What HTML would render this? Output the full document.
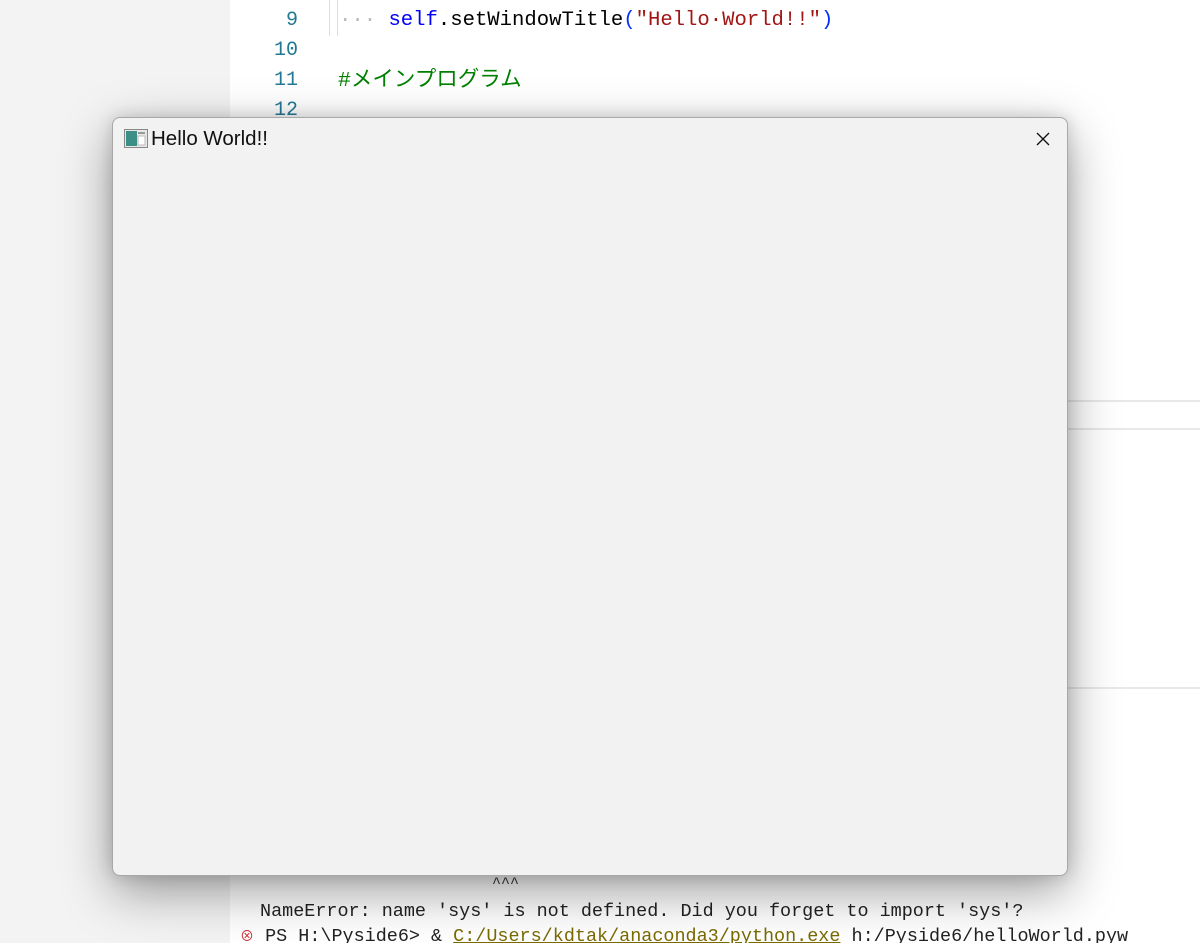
<!DOCTYPE html>
<html><head><meta charset="utf-8"><style>
html,body{margin:0;padding:0;overflow:hidden;height:943px}
body{width:1200px;height:943px;position:relative;overflow:hidden;background:#f3f3f3;font-family:"Liberation Mono","Noto Sans CJK JP",monospace}
#ed{position:absolute;left:230px;top:0;width:970px;height:943px;background:#fff}
.ln{position:absolute;left:230px;width:68px;text-align:right;color:#237893;font-size:20px;line-height:30px}
.code{position:absolute;font-size:20.6px;line-height:30px;white-space:pre}
.hl{position:absolute;left:230px;right:0;height:2px;background:#e8e8e8}
#term{position:absolute;left:230px;top:876px;width:970px;height:67px;background:#fff;overflow:hidden}
.t{position:absolute;font-size:18.45px;line-height:24px;white-space:pre}
#win{position:absolute;left:112px;top:117px;width:954px;height:757px;background:#f2f2f2;border:1px solid #a8a8a8;border-radius:8px;box-shadow:0 16px 50px rgba(0,0,0,0.38),0 0 16px rgba(0,0,0,0.15)}
#title{position:absolute;left:38px;top:9px;font-family:"Liberation Sans",sans-serif;font-size:20.5px;color:#111}
</style></head><body>
<div id="ed"></div>
<div class="ln" style="top:6px">9</div>
<div class="ln" style="top:36px">10</div>
<div class="ln" style="top:66px">11</div>
<div class="ln" style="top:96px">12</div>
<div style="position:absolute;left:337px;top:0;width:1px;height:36px;background:#ddd"></div>
<div style="position:absolute;left:329px;top:0;width:1px;height:36px;background:#ddd"></div>
<div class="code" style="left:339px;top:6px;color:#bbb">··· <span style="color:#0000ff">self</span><span style="color:#000">.setWindowTitle</span><span style="color:#0431fa">(</span><span style="color:#a31515">"Hello·World!!"</span><span style="color:#0431fa">)</span></div>
<div class="code" style="left:338px;top:66px;color:#008000;font-size:21.5px">#メインプログラム</div>
<div class="hl" style="top:400px"></div>
<div class="hl" style="top:428px"></div>
<div class="hl" style="top:687px"></div>
<div id="term">
<div class="t" style="left:262px;top:-4px;font-size:15px;color:#333">^^^</div>
<div class="t" style="left:30px;top:24px;color:#222">NameError: name 'sys' is not defined. Did you forget to import 'sys'?</div>
<div class="t" style="left:10px;top:49px;color:#222"><span style="color:#c33;font-size:14px">⊗</span> PS H:\Pyside6&gt; &amp; <span style="color:#7a6a00;text-decoration:underline">C:/Users/kdtak/anaconda3/python.exe</span> h:/Pyside6/helloWorld.pyw</div>
</div>
<div id="win">
<svg style="position:absolute;left:11px;top:11px" width="24" height="19" viewBox="0 0 24 19"><rect x="0.5" y="0.5" width="23" height="18" fill="#e8e8e8" stroke="#888"/><rect x="2" y="2" width="11" height="15" fill="#3b8f86"/><rect x="14" y="3" width="7" height="2" fill="#999"/><rect x="14" y="7" width="7" height="9" fill="#fff" stroke="#bbb"/></svg>
<div id="title">Hello World!!</div>
<svg style="position:absolute;left:923px;top:14px" width="14" height="14" viewBox="0 0 14 14"><path d="M1 1L13 13M13 1L1 13" stroke="#111" stroke-width="1.3"/></svg>
</div>
</body></html>
